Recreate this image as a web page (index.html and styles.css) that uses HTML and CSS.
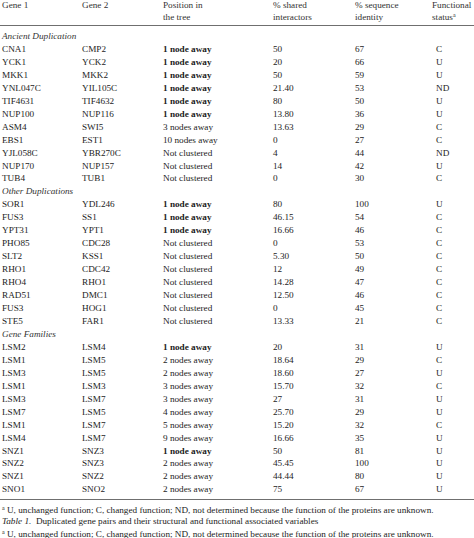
FILE: index.html
```html
<!DOCTYPE html>
<html>
<head>
<meta charset="utf-8">
<link rel="stylesheet" href="styles.css">
</head>
<body>
<table class="tbl">
  <colgroup>
    <col class="c1"><col class="c2"><col class="c3"><col class="c4"><col class="c5"><col class="c6">
  </colgroup>
  <thead>
    <tr>
      <th>Gene 1</th>
      <th>Gene 2</th>
      <th>Position in<br>the tree</th>
      <th>% shared<br>interactors</th>
      <th>% sequence<br>identity</th>
      <th>Functional<br>status<sup>a</sup></th>
    </tr>
  </thead>
  <tbody>
    <tr class="spacer"><td colspan="6"></td></tr>
    <tr><td colspan="6" class="sec">Ancient Duplication</td></tr>
    <tr><td>CNA1</td><td>CMP2</td><td class="b">1 node away</td><td>50</td><td>67</td><td class="st">C</td></tr>
    <tr><td>YCK1</td><td>YCK2</td><td class="b">1 node away</td><td>20</td><td>66</td><td class="st">U</td></tr>
    <tr><td>MKK1</td><td>MKK2</td><td class="b">1 node away</td><td>50</td><td>59</td><td class="st">U</td></tr>
    <tr><td>YNL047C</td><td>YIL105C</td><td class="b">1 node away</td><td>21.40</td><td>53</td><td class="st">ND</td></tr>
    <tr><td>TIF4631</td><td>TIF4632</td><td class="b">1 node away</td><td>80</td><td>50</td><td class="st">U</td></tr>
    <tr><td>NUP100</td><td>NUP116</td><td class="b">1 node away</td><td>13.80</td><td>36</td><td class="st">U</td></tr>
    <tr><td>ASM4</td><td>SWI5</td><td>3 nodes away</td><td>13.63</td><td>29</td><td class="st">C</td></tr>
    <tr><td>EBS1</td><td>EST1</td><td>10 nodes away</td><td>0</td><td>27</td><td class="st">C</td></tr>
    <tr><td>YJL058C</td><td>YBR270C</td><td>Not clustered</td><td>4</td><td>44</td><td class="st">ND</td></tr>
    <tr><td>NUP170</td><td>NUP157</td><td>Not clustered</td><td>14</td><td>42</td><td class="st">U</td></tr>
    <tr><td>TUB4</td><td>TUB1</td><td>Not clustered</td><td>0</td><td>30</td><td class="st">C</td></tr>
    <tr><td colspan="6" class="sec">Other Duplications</td></tr>
    <tr><td>SOR1</td><td>YDL246</td><td class="b">1 node away</td><td>80</td><td>100</td><td class="st">U</td></tr>
    <tr><td>FUS3</td><td>SS1</td><td class="b">1 node away</td><td>46.15</td><td>54</td><td class="st">C</td></tr>
    <tr><td>YPT31</td><td>YPT1</td><td class="b">1 node away</td><td>16.66</td><td>46</td><td class="st">C</td></tr>
    <tr><td>PHO85</td><td>CDC28</td><td>Not clustered</td><td>0</td><td>53</td><td class="st">C</td></tr>
    <tr><td>SLT2</td><td>KSS1</td><td>Not clustered</td><td>5.30</td><td>50</td><td class="st">C</td></tr>
    <tr><td>RHO1</td><td>CDC42</td><td>Not clustered</td><td>12</td><td>49</td><td class="st">C</td></tr>
    <tr><td>RHO4</td><td>RHO1</td><td>Not clustered</td><td>14.28</td><td>47</td><td class="st">C</td></tr>
    <tr><td>RAD51</td><td>DMC1</td><td>Not clustered</td><td>12.50</td><td>46</td><td class="st">C</td></tr>
    <tr><td>FUS3</td><td>HOG1</td><td>Not clustered</td><td>0</td><td>45</td><td class="st">C</td></tr>
    <tr><td>STE5</td><td>FAR1</td><td>Not clustered</td><td>13.33</td><td>21</td><td class="st">C</td></tr>
    <tr><td colspan="6" class="sec">Gene Families</td></tr>
    <tr><td>LSM2</td><td>LSM4</td><td class="b">1 node away</td><td>20</td><td>31</td><td class="st">U</td></tr>
    <tr><td>LSM1</td><td>LSM5</td><td>2 nodes away</td><td>18.64</td><td>29</td><td class="st">C</td></tr>
    <tr><td>LSM3</td><td>LSM5</td><td>2 nodes away</td><td>18.60</td><td>27</td><td class="st">U</td></tr>
    <tr><td>LSM1</td><td>LSM3</td><td>3 nodes away</td><td>15.70</td><td>32</td><td class="st">C</td></tr>
    <tr><td>LSM3</td><td>LSM7</td><td>3 nodes away</td><td>27</td><td>31</td><td class="st">U</td></tr>
    <tr><td>LSM7</td><td>LSM5</td><td>4 nodes away</td><td>25.70</td><td>29</td><td class="st">U</td></tr>
    <tr><td>LSM1</td><td>LSM7</td><td>5 nodes away</td><td>15.20</td><td>32</td><td class="st">C</td></tr>
    <tr><td>LSM4</td><td>LSM7</td><td>9 nodes away</td><td>16.66</td><td>35</td><td class="st">U</td></tr>
    <tr><td>SNZ1</td><td>SNZ3</td><td class="b">1 node away</td><td>50</td><td>81</td><td class="st">U</td></tr>
    <tr><td>SNZ2</td><td>SNZ3</td><td>2 nodes away</td><td>45.45</td><td>100</td><td class="st">U</td></tr>
    <tr><td>SNZ1</td><td>SNZ2</td><td>2 nodes away</td><td>44.44</td><td>80</td><td class="st">U</td></tr>
    <tr class="last"><td>SNO1</td><td>SNO2</td><td>2 nodes away</td><td>75</td><td>67</td><td class="st">U</td></tr>
  </tbody>
</table>
<div class="notes">
  <p class="fn"><sup>a</sup> U, unchanged function; C, changed function; ND, not determined because the function of the proteins are unknown.</p>
  <p class="cap"><i>Table 1.</i>&nbsp; Duplicated gene pairs and their structural and functional associated variables</p>
  <p class="fn fn2"><sup>a</sup> U, unchanged function; C, changed function; ND, not determined because the function of the proteins are unknown.</p>
</div>
</body>
</html>
```

FILE: styles.css
```css
html, body {
  margin: 0;
  padding: 0;
  background: #ffffff;
}
body {
  width: 474px;
  height: 538px;
  overflow: hidden;
  font-family: "Liberation Serif", "Times New Roman", serif;
  font-size: 9.2px;
  color: #1c1c1c;
}
.tbl {
  width: 474px;
  border-collapse: collapse;
  table-layout: fixed;
}
.c1 { width: 82px; }
.c2 { width: 81px; }
.c3 { width: 110px; }
.c4 { width: 82px; }
.c5 { width: 77px; }
.c6 { width: 42px; }
.tbl th {
  text-align: left;
  font-weight: normal;
  vertical-align: top;
  line-height: 11.5px;
  padding: 0 0 1.5px 0;
  height: 23px;
  border-bottom: 1.5px solid #6f6f6f;
  color: #333;
}
.tbl th:first-child, .tbl td:first-child { padding-left: 2px; }
.tbl th sup, .fn sup {
  font-size: 6px;
  line-height: 0;
  vertical-align: 3px;
}
.tbl td {
  padding: 0;
  line-height: 12.95px;
  height: 12.95px;
  white-space: nowrap;
  overflow: visible;
}
.tbl .spacer td {
  height: 4.5px;
  line-height: 4.5px;
}
.tbl td.sec {
  font-style: italic;
  color: #333;
}
.tbl td.b { font-weight: bold; }
.tbl td.st { padding-left: 4px; }
.tbl tr.last td {
  border-bottom: 1.5px solid #6f6f6f;
  padding-bottom: 3px;
}
.notes {
  padding: 5px 0 0 2px;
}
.notes p {
  margin: 0;
  line-height: 11px;
  white-space: nowrap;
}
.cap i { font-style: italic; }
.fn2 { margin-top: 2px !important; }
```
